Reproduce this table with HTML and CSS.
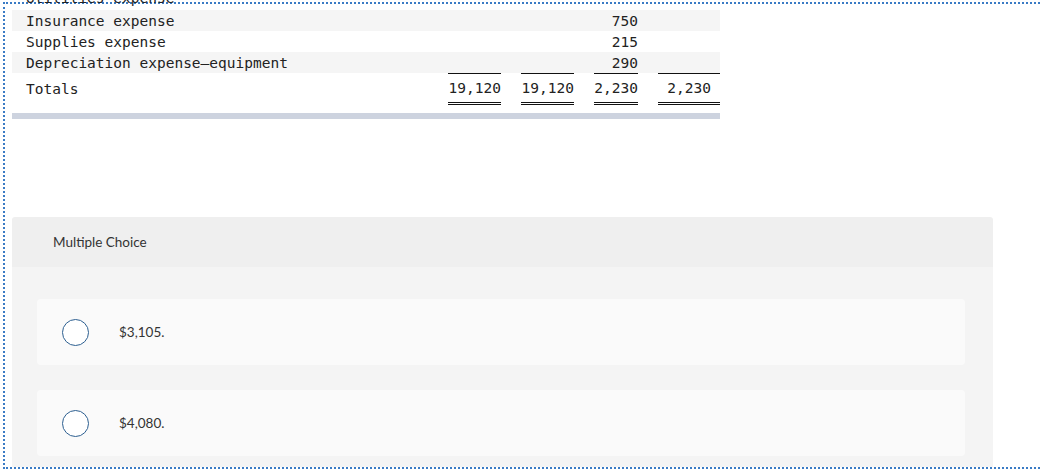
FILE: index.html
```html
<!DOCTYPE html>
<html>
<head>
<meta charset="utf-8">
<link rel="stylesheet" href="styles.css">
</head>
<body>
<div class="frame">
  <div class="ledger">
    <div class="row cut">
      <div class="label">Utilities expense</div>
      <div class="num"></div><div class="num"></div><div class="num"></div><div class="num"></div>
    </div>
    <div class="row shade">
      <div class="label">Insurance expense</div>
      <div class="num"></div><div class="num"></div><div class="num">750</div><div class="num"></div>
    </div>
    <div class="row">
      <div class="label">Supplies expense</div>
      <div class="num"></div><div class="num"></div><div class="num">215</div><div class="num"></div>
    </div>
    <div class="row shade">
      <div class="label">Depreciation expense—equipment</div>
      <div class="num"></div><div class="num"></div><div class="num">290</div><div class="num"></div>
    </div>
    <div class="row totals">
      <div class="label">Totals</div>
      <div class="num total">19,120</div>
      <div class="num total">19,120</div>
      <div class="num total">2,230</div>
      <div class="num total last">2,230</div>
    </div>
    <div class="bar"></div>
  </div>

  <div class="mc">
    <div class="mc-head">Multiple Choice</div>
    <div class="mc-body">
      <div class="option">
        <span class="radio"></span>
        <span class="opt-text">$3,105.</span>
      </div>
      <div class="option">
        <span class="radio"></span>
        <span class="opt-text">$4,080.</span>
      </div>
    </div>
  </div>
</div>
</body>
</html>
```

FILE: styles.css
```css
html, body {
  margin: 0;
  padding: 0;
  background: #ffffff;
  overflow: hidden;
}

.frame {
  margin: 2px 0 0 3px;
  width: 1100px;
  height: 463px;
  border: 2px dotted #3a7bc5;
  box-sizing: content-box;
}

.ledger {
  margin: -15px 0 0 7px;
  width: 708px;
  font-family: "DejaVu Sans Mono", monospace;
  font-size: 14.5px;
  color: #222;
}

.row {
  display: grid;
  grid-template-columns: 416px 53px 53px 44px 62px;
  column-gap: 20px;
  height: 21px;
  line-height: 21px;
  background: transparent;
}

.row.shade {
  background: #f5f5f5;
}

.label {
  padding-left: 14px;
  white-space: nowrap;
  line-height: 23px;
}

.row.cut .label {
  line-height: 18px;
}

.num {
  text-align: right;
  line-height: 23px;
}

.row.totals {
  height: auto;
  margin-bottom: 8px;
}

.row.totals .label {
  line-height: 32px;
}

.num.total {
  border-top: 1px solid #111;
  border-bottom: 3px double #111;
  line-height: 28px;
}

.num.total.last {
  padding-right: 9px;
}

.bar {
  height: 6px;
  background: #cdd3df;
}

.mc {
  margin: 98px 0 0 7px;
  width: 981px;
  font-family: Lato, "Open Sans", sans-serif;
  font-size: 13.5px;
  color: #333;
}

.mc-head {
  height: 50px;
  line-height: 50px;
  padding-left: 41px;
  background: #efefef;
  border-radius: 3px 3px 0 0;
}

.mc-body {
  background: #f4f4f4;
  padding: 32px 28px 11px 25px;
  display: flex;
  flex-direction: column;
  gap: 25px;
}

.option {
  height: 66px;
  background: #fafafa;
  border-radius: 4px;
  display: flex;
  align-items: center;
  padding-left: 25px;
}

.radio {
  width: 25px;
  height: 25px;
  border: 1.6px solid #2d5f90;
  border-radius: 50%;
  background: #fff;
  flex: none;
}

.opt-text {
  margin-left: 30px;
}
```
